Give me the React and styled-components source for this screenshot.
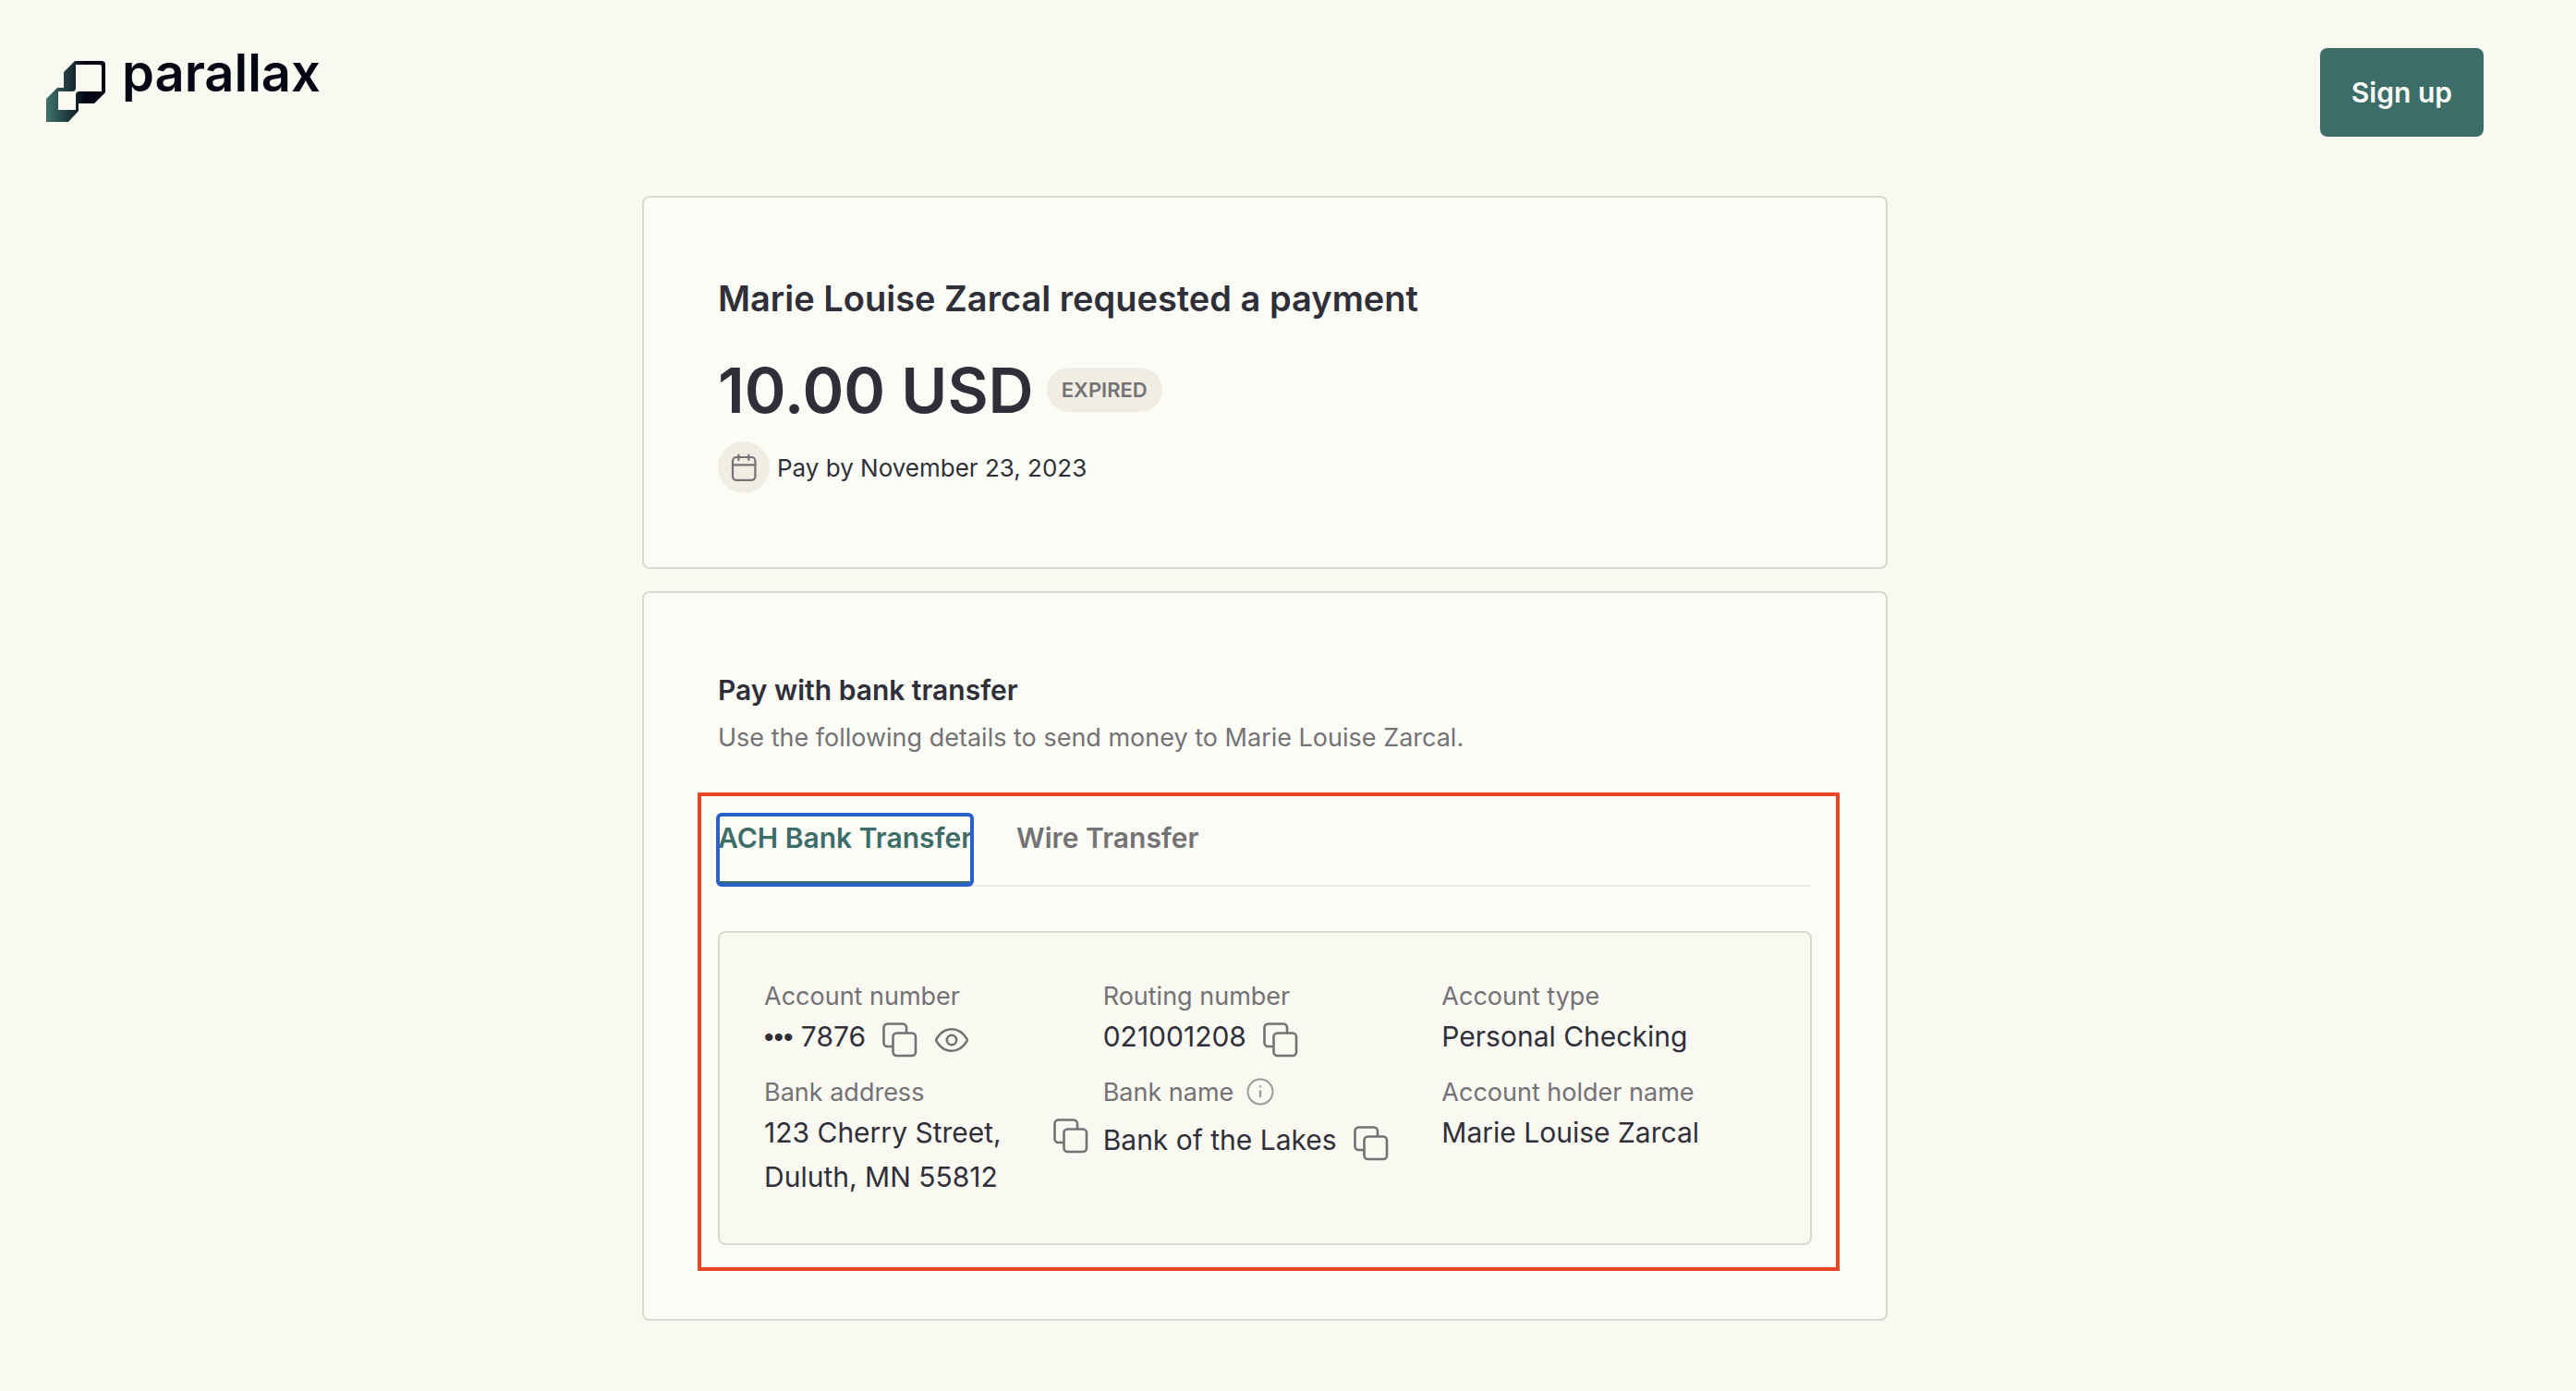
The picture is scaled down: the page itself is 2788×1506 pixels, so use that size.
import { useState } from 'react'
import styled, { createGlobalStyle } from 'styled-components'

const details = [
  { label: 'Account number', value: '7876', copy: true, masked: true },
  { label: 'Routing number', value: '021001208', copy: true },
  { label: 'Account type', value: 'Personal Checking' },
  { label: 'Bank address', value: '123 Cherry Street, Duluth, MN 55812', copy: true, wide: true },
  { label: 'Bank name', value: 'Bank of the Lakes', copy: true, info: true },
  { label: 'Account holder name', value: 'Marie Louise Zarcal' },
]

const tabs = ['ACH Bank Transfer', 'Wire Transfer']

function LogoMark() {
  return (
    <svg width="64" height="66" viewBox="0 0 64 66" aria-hidden="true">
      <defs>
        <linearGradient id="mark" x1="0" y1="0" x2="1" y2="0">
          <stop offset="0.05" stopColor="#3d6d69" />
          <stop offset="0.5" stopColor="#13222b" />
          <stop offset="0.65" stopColor="#040614" />
        </linearGradient>
      </defs>
      <path
        fill="url(#mark)"
        fillRule="evenodd"
        d="M31 0H60Q64 0 64 4V34L52 46H35V54L24 66H0V41L12 29H19V12ZM32 4V29Q32 33 28 33H13V53H32V37Q32 33 36 33H60V6Q60 4 58 4Z"
      />
    </svg>
  )
}

function CopyIcon() {
  return (
    <svg width="38" height="38" viewBox="0 0 38 38" fill="none" stroke="#737275" strokeWidth="2.6" strokeLinecap="round" aria-hidden="true">
      <rect x="11.5" y="11.5" width="24.5" height="24.5" rx="4" />
      <path d="M11 26H5.5a4 4 0 0 1-4-4V5.5a4 4 0 0 1 4-4H22a4 4 0 0 1 4 4V11" />
    </svg>
  )
}

function EyeIcon() {
  return (
    <svg width="38" height="38" viewBox="0 0 38 38" fill="none" stroke="#737275" strokeWidth="2.6" strokeLinejoin="round" aria-hidden="true">
      <path d="M2.6 20.4Q1.8 19 2.6 17.6C7 10.5 12.5 7.2 19 7.2S31 10.5 35.4 17.6Q36.2 19 35.4 20.4C31 27.5 25.5 30.8 19 30.8S7 27.5 2.6 20.4Z" />
      <circle cx="19" cy="19" r="5.2" />
    </svg>
  )
}

function InfoIcon() {
  return (
    <svg width="30" height="30" viewBox="0 0 30 30" fill="none" stroke="#9b9b98" strokeWidth="2" strokeLinecap="round" aria-hidden="true">
      <circle cx="15" cy="15" r="13.5" />
      <path d="M15 14.4V20" strokeWidth="2.4" />
      <circle cx="15" cy="9.4" r="0.4" />
    </svg>
  )
}

function CalendarIcon() {
  return (
    <svg width="32" height="32" viewBox="0 0 32 32" fill="none" stroke="#737275" strokeWidth="2.2" strokeLinecap="round" aria-hidden="true">
      <rect x="4" y="5" width="24.4" height="24.8" rx="4" />
      <path d="M4 13.3H28.4M10.4 2.5V8M21.4 2.5V8" />
    </svg>
  )
}

function Detail({ item }) {
  return (
    <div>
      <Label $tall={item.info}>
        {item.label}
        {item.info && (
          <IconButton type="button" aria-label="About the bank name">
            <InfoIcon />
          </IconButton>
        )}
      </Label>
      <Value $wide={item.wide}>
        <span>
          {item.masked && <Mask>••• </Mask>}
          {item.value}
        </span>
        {item.copy && (
          <IconButton type="button" aria-label={'Copy ' + item.label}>
            <CopyIcon />
          </IconButton>
        )}
        {item.masked && (
          <IconButton type="button" aria-label="Show account number">
            <EyeIcon />
          </IconButton>
        )}
      </Value>
    </div>
  )
}

function App() {
  const [active, setActive] = useState(tabs[0])

  return (
    <Page>
      <GlobalStyle />
      <Header>
        <Logo href="#">
          <LogoMark />
          <LogoText>parallax</LogoText>
        </Logo>
        <SignUp type="button">Sign up</SignUp>
      </Header>
      <Main>
        <Card>
          <Title>Marie Louise Zarcal requested a payment</Title>
          <AmountRow>
            <Amount>10.00 USD</Amount>
            <Badge>EXPIRED</Badge>
          </AmountRow>
          <DueRow>
            <IconCircle>
              <CalendarIcon />
            </IconCircle>
            Pay by November 23, 2023
          </DueRow>
        </Card>
        <Card>
          <Subtitle>Pay with bank transfer</Subtitle>
          <Hint>Use the following details to send money to Marie Louise Zarcal.</Hint>
          <Transfer>
            <TabList role="tablist">
              {tabs.map((tab) => (
                <Tab
                  key={tab}
                  type="button"
                  role="tab"
                  aria-selected={tab === active}
                  $active={tab === active}
                  onClick={() => setActive(tab)}
                >
                  {tab}
                </Tab>
              ))}
            </TabList>
            <Details>
              {details.map((item) => (
                <Detail key={item.label} item={item} />
              ))}
            </Details>
          </Transfer>
        </Card>
      </Main>
    </Page>
  )
}

const GlobalStyle = createGlobalStyle`
  * {
    box-sizing: border-box;
  }
  body {
    margin: 0;
    background: #f9f8f1;
    color: #2f2f3a;
    font-family: Inter, "Liberation Sans", sans-serif;
  }
  button {
    font-family: inherit;
    cursor: pointer;
  }
`
const Page = styled.div`
  padding: 52px 100px 76px 50px;
`
const Header = styled.header`
  display: flex;
  justify-content: space-between;
  align-items: flex-start;
`
const Logo = styled.a`
  display: flex;
  align-items: flex-end;
  gap: 18px;
  height: 80px;
  color: #040614;
  text-decoration: none;
`
const LogoText = styled.span`
  font-size: 56px;
  font-weight: 600;
  line-height: 106px;
`
const SignUp = styled.button`
  height: 96px;
  padding: 0 34px;
  border: none;
  border-radius: 8px;
  background: #3d6d69;
  color: #fcfcf6;
  font-size: 30px;
  font-weight: 600;
`
const Main = styled.main`
  display: flex;
  flex-direction: column;
  gap: 24px;
  max-width: 1348px;
  margin: 64px auto 0;
`
const Card = styled.section`
  padding: 80px;
  border: 2px solid #dbd9cf;
  border-radius: 8px;
  background: #fcfcf6;
`
const Title = styled.h1`
  margin: 0 0 22px;
  font-size: 38px;
  font-weight: 600;
  line-height: 58px;
`
const AmountRow = styled.div`
  display: flex;
  align-items: center;
  gap: 14px;
  margin-bottom: 8px;
`
const Amount = styled.strong`
  font-size: 68px;
  font-weight: 600;
  line-height: 96px;
`
const Badge = styled.span`
  padding: 0 16px;
  border-radius: 24px;
  background: #f0ede3;
  color: #737275;
  font-size: 22px;
  font-weight: 600;
  line-height: 48px;
`
const DueRow = styled.div`
  display: flex;
  align-items: center;
  gap: 8px;
  font-size: 26px;
`
const IconCircle = styled.span`
  display: flex;
  align-items: center;
  justify-content: center;
  width: 56px;
  height: 56px;
  border-radius: 50%;
  background: #f0ede3;
`
const Subtitle = styled.h2`
  margin: 0 0 6px;
  font-size: 30px;
  font-weight: 600;
  line-height: 50px;
`
const Hint = styled.p`
  margin: 0;
  color: #737275;
  font-size: 27px;
  line-height: 42px;
`
const Transfer = styled.div`
  position: relative;
  margin-top: 62px;
  &:after {
    content: "";
    position: absolute;
    inset: -24px -30px -28px -22px;
    border: 4px solid #ec4427;
    pointer-events: none;
  }
`
const TabList = styled.div`
  display: flex;
  gap: 48px;
  border-bottom: 2px solid #f0ece1;
`
const Tab = styled.button`
  padding: 0 0 22px;
  border: none;
  border-bottom: 4px solid ${(props) => (props.$active ? '#3d6d69' : 'transparent')};
  border-radius: ${(props) => (props.$active ? '4px' : '0')};
  outline: ${(props) => (props.$active ? '4px solid #2960cc' : 'none')};
  outline-offset: -2px;
  background: none;
  color: ${(props) => (props.$active ? '#3d6d69' : '#737275')};
  font-size: 30px;
  font-weight: 600;
  line-height: 50px;
`
const Details = styled.div`
  display: grid;
  grid-template-columns: repeat(3, 1fr);
  gap: 16px;
  margin-top: 48px;
  padding: 48px;
  border: 2px solid #dbd9cf;
  border-radius: 8px;
  background: #f9f8f1;
`
const Label = styled.div`
  display: flex;
  align-items: center;
  gap: 14px;
  height: 40px;
  margin-bottom: ${(props) => (props.$tall ? '8px' : '0')};
  color: #737275;
  font-size: 27px;
`
const Value = styled.div`
  display: flex;
  align-items: flex-start;
  justify-content: ${(props) => (props.$wide ? 'space-between' : 'flex-start')};
  gap: 18px;
  font-size: 30px;
  line-height: 48px;
`
const Mask = styled.span`
  font-family: "Liberation Sans", sans-serif;
  line-height: 1;
`
// taller than its line, so the extra height is taken back below
const IconButton = styled.button`
  display: flex;
  align-items: center;
  height: 56px;
  margin-bottom: -8px;
  padding: 0;
  border: none;
  background: none;
  ${Label} & {
    height: 40px;
    margin-bottom: 0;
  }
`
export default App
